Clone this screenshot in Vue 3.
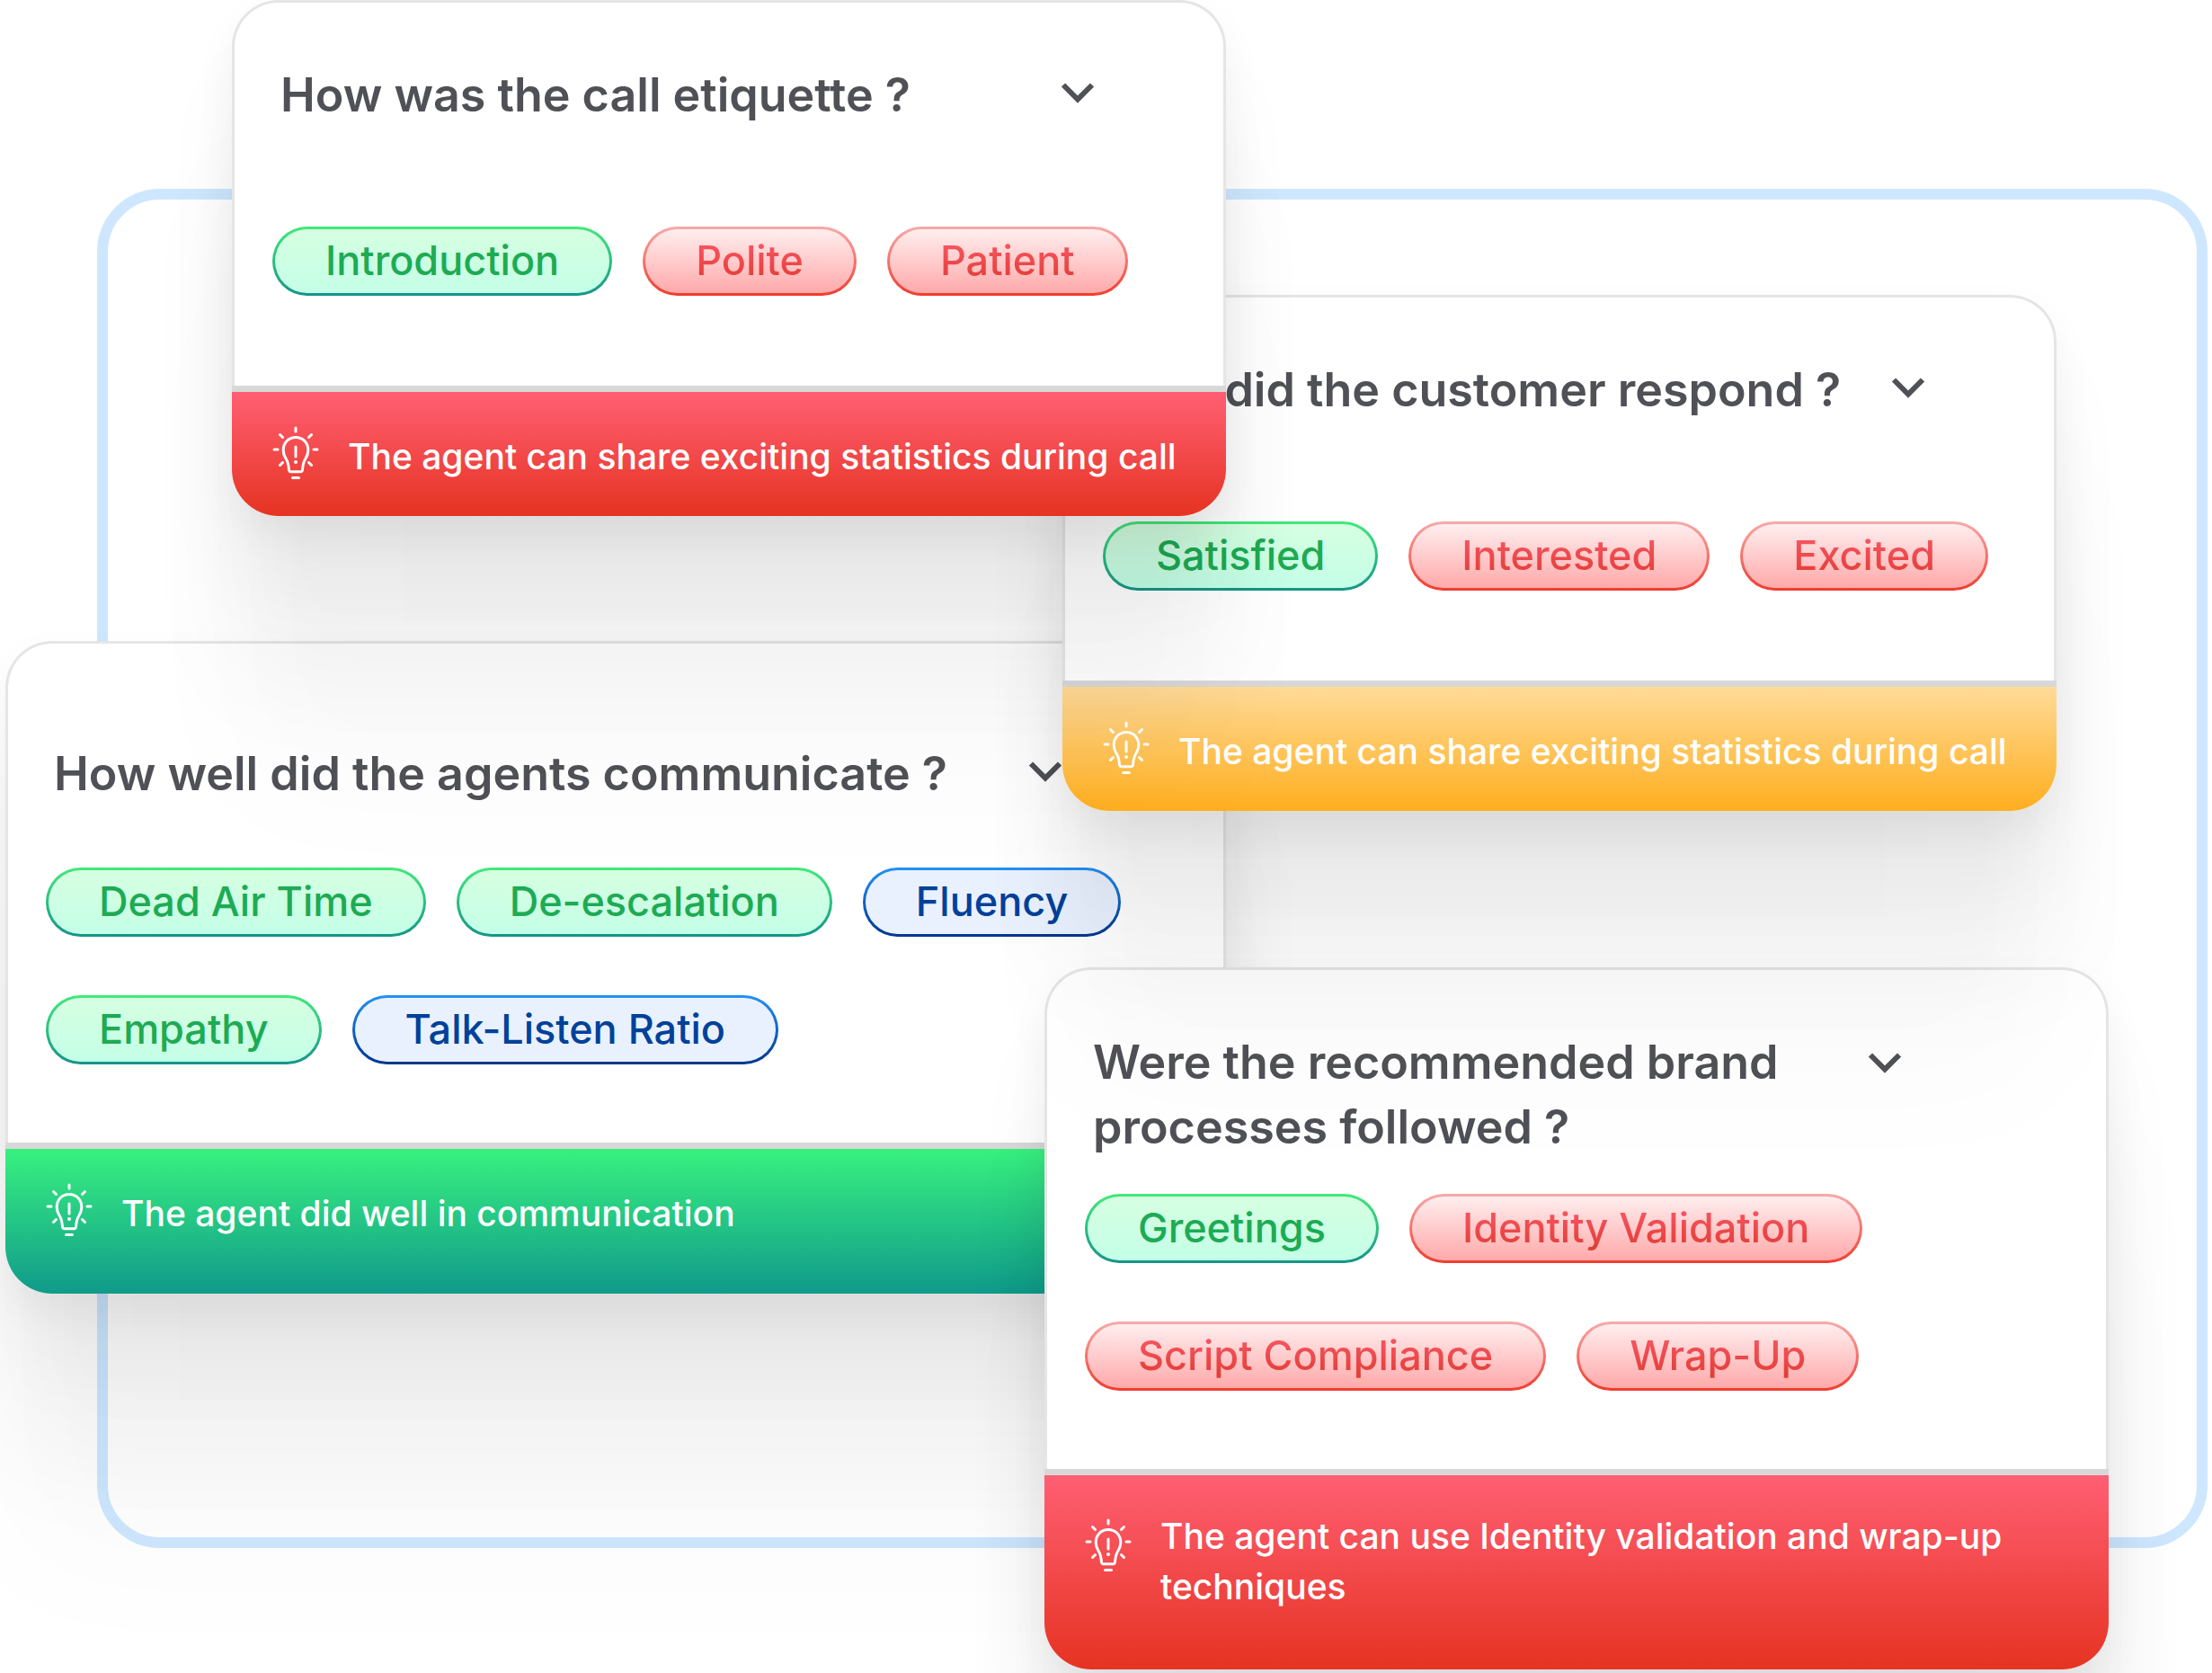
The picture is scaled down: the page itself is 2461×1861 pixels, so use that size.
<script setup>
const cards = [
  {
    id: 'communication',
    title: 'How well did the agents communicate ?',
    tone: 'green',
    chips: [
      { label: 'Dead Air Time', tone: 'green' },
      { label: 'De-escalation', tone: 'green' },
      { label: 'Fluency', tone: 'blue' },
      { label: 'Empathy', tone: 'green' },
      { label: 'Talk-Listen Ratio', tone: 'blue' },
    ],
    tip: 'The agent did well in communication',
  },
  {
    id: 'brand',
    title: 'Were the recommended brand processes followed ?',
    tone: 'red',
    chips: [
      { label: 'Greetings', tone: 'green' },
      { label: 'Identity Validation', tone: 'red' },
      { label: 'Script Compliance', tone: 'red' },
      { label: 'Wrap-Up', tone: 'red' },
    ],
    tip: 'The agent can use Identity validation and wrap-up techniques',
  },
  {
    id: 'response',
    title: 'How did the customer respond ?',
    tone: 'amber',
    chips: [
      { label: 'Satisfied', tone: 'green' },
      { label: 'Interested', tone: 'red' },
      { label: 'Excited', tone: 'red' },
    ],
    tip: 'The agent can share exciting statistics during call',
  },
  {
    id: 'etiquette',
    title: 'How was the call etiquette ?',
    tone: 'red',
    chips: [
      { label: 'Introduction', tone: 'green' },
      { label: 'Polite', tone: 'red' },
      { label: 'Patient', tone: 'red' },
    ],
    tip: 'The agent can share exciting statistics during call',
  },
]
</script>

<template>
  <main class="stage">
    <div class="frame"></div>
    <article v-for="card in cards" :key="card.id" class="card" :class="card.id">
      <div class="body">
        <header class="head">
          <h2 class="title">{{ card.title }}</h2>
          <button class="toggle" type="button" :aria-label="'Expand: ' + card.title">
            <svg viewBox="0 0 38 24" width="38" height="24" aria-hidden="true">
              <path d="M3 3.5 19 19.5 35 3.5" fill="none" stroke="#505156" stroke-width="6" />
            </svg>
          </button>
        </header>
        <ul class="chips">
          <li v-for="chip in card.chips" :key="chip.label" class="chip" :class="chip.tone">
            <span class="label">{{ chip.label }}</span>
          </li>
        </ul>
      </div>
      <footer class="tip" :class="card.tone">
        <svg class="bulb" viewBox="0 0 52 60" width="52" height="60" aria-hidden="true">
          <g fill="none" stroke="#fff" stroke-width="3" stroke-linecap="round" stroke-linejoin="round">
            <path d="M26 2v4M2 26h4M46 26h4M8.500 9.500l3 3M43.500 9.500l-3 3M8.500 43.500l3-3M43.500 43.500l-3-3" />
            <path d="M18.500 48.500c-.5-6-1.500-9.500-3.500-12.500-1.700-2.700-2.800-5.800-2.800-9C12.200 18.500 18 12.500 26 12.500S39.800 18.500 39.800 27c0 3.200-1.100 6.300-2.800 9-2 3-3 6.500-3.500 12.500-.1 1.500-.8 2.300-2.200 2.300H20.700c-1.400 0-2.100-.8-2.200-2.300Z" />
            <path d="M26 23v11M22.500 57.500h7" />
          </g>
          <circle cx="26" cy="40" r="2" fill="#fff" />
        </svg>
        <p class="tip-text">{{ card.tip }}</p>
      </footer>
    </article>
  </main>
</template>

<style>
body {
  margin: 0;
  background: #fff;
}
</style>

<style scoped>
.stage {
  display: grid;
  grid-template-columns:
    minmax(0, 6fr) minmax(0, 102fr) minmax(0, 150fr) minmax(0, 904fr) minmax(0, 20fr)
    minmax(0, 182fr) minmax(0, 924fr) minmax(0, 58fr) minmax(0, 110fr) minmax(0, 5fr);
  align-items: start;
  min-height: 100vh;
  overflow: hidden;
  font-family: Inter, 'Liberation Sans', sans-serif;
}

.frame {
  grid-area: 1 / 3 / 2 / 10;
  align-self: stretch;
  margin: 210px 0 139px;
  border: 12px solid #cee7ff;
  border-radius: 70px;
}

.card {
  border-radius: 52px;
  box-shadow:
    0 20px 46px rgba(0, 0, 0, 0.05),
    0 80px 90px rgba(0, 0, 0, 0.045),
    0 190px 120px rgba(0, 0, 0, 0.04),
    0 310px 160px rgba(0, 0, 0, 0.02);
}

.body {
  border: 3px solid #e5e5e5;
  border-bottom: 0;
  border-radius: 52px 52px 0 0;
  background: #fff;
}

.head {
  display: flex;
  align-items: flex-start;
  box-sizing: border-box;
  height: 249px;
  padding: 67px 143px 0 51px;
}

.title {
  flex: 1;
  margin: 0;
  color: #505156;
  font-size: 52px;
  font-weight: 600;
  line-height: 72px;
}

.toggle {
  display: flex;
  align-items: center;
  height: 66px;
  padding: 0;
  border: 0;
  background: none;
  cursor: pointer;
}

.chips {
  display: flex;
  flex-wrap: wrap;
  gap: 65px 34px;
  margin: 0;
  padding: 0 42px 100px;
  list-style: none;
}

.chip {
  box-sizing: border-box;
  height: 77px;
  padding: 0 56px;
  border: 3px solid transparent;
  border-radius: 39px;
  font-size: 45px;
  font-weight: 500;
  line-height: 70px;
  white-space: nowrap;
}

.chip.green {
  background:
    linear-gradient(#d6ffe1, #c3ffe7) padding-box,
    linear-gradient(#43e97b, #159488) border-box;
  color: #1dab54;
}

.chip.red {
  background:
    linear-gradient(#ffeeee, #ffa9aa) padding-box,
    linear-gradient(#f8aaaa, #f03c2e) border-box;
}

.chip.red .label {
  display: block;
  background: linear-gradient(#fb5a6b 10%, #e03a30 90%);
  background-clip: text;
  color: transparent;
}

.chip.blue {
  background:
    linear-gradient(#e9f1ff, #e9f1ff) padding-box,
    linear-gradient(#2492f5, #003590) border-box;
  color: #00419a;
}

.tip {
  display: flex;
  align-items: flex-start;
  gap: 32px;
  padding: 38px 30px 38px 45px;
  border-top: 7px solid #d8d8d8;
  border-radius: 0 0 52px 52px;
  color: #fff;
}

.tip.red {
  background: linear-gradient(#ff5f73, #e63322) padding-box;
}

.tip.amber {
  background: linear-gradient(#ffdb98, #ffae1e) padding-box;
}

.tip.green {
  background: linear-gradient(#38f17f, #109a8b) padding-box;
}

.bulb {
  flex: none;
}

.tip-text {
  margin: 0;
  padding-top: 6px;
  font-size: 39px;
  font-weight: 450;
  line-height: 56px;
}

.communication {
  grid-area: 1 / 2 / 2 / 7;
  margin-top: 713px;
}

.communication .head {
  padding: 109px 179px 0 51px;
}

.communication .chips,
.brand .chips {
  padding-bottom: 87px;
}

.communication .tip {
  padding-bottom: 61px;
}

.brand {
  grid-area: 1 / 5 / 2 / 9;
  margin-top: 1076px;
}

.brand .head {
  padding-right: 227px;
}

.brand .toggle {
  height: 72px;
}

.brand .tip {
  padding-bottom: 64px;
}

.brand .bulb {
  padding-top: 10px;
}

.brand .tip-text {
  padding-top: 2px;
}

.response {
  grid-area: 1 / 6 / 2 / 8;
  margin-top: 328px;
}

.etiquette {
  grid-area: 1 / 4 / 2 / 7;
}
</style>
